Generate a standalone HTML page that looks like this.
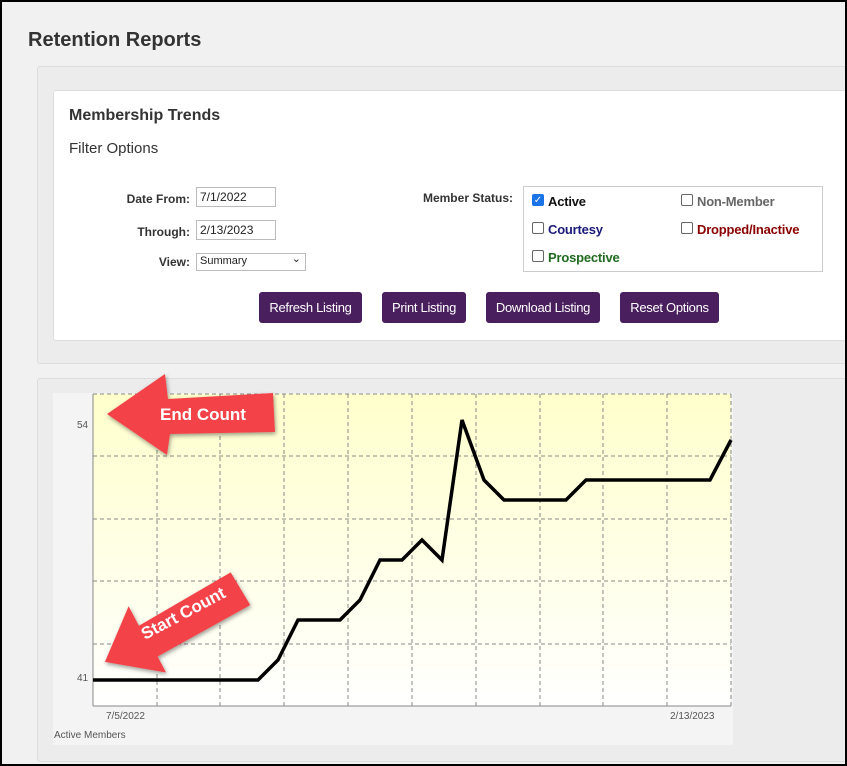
<!DOCTYPE html>
<html><head><style>
*{box-sizing:border-box}
body{margin:0;width:847px;height:766px;overflow:hidden;font-family:"Liberation Sans",Arial,sans-serif;background:#f1f1f1;position:relative}
.frame{position:absolute;left:0;top:0;width:847px;height:766px;border:2px solid #000;z-index:10;pointer-events:none}
h1{position:absolute;left:28px;top:29px;margin:0;font-size:20px;font-weight:bold;color:#333}
.p1{position:absolute;left:37px;top:66px;width:820px;height:298px;background:#ececec;border:1px solid #ddd;border-radius:3px}
.in{position:absolute;left:53px;top:90px;width:800px;height:251px;background:#fff;border:1px solid #ddd;border-radius:3px}
.t{position:absolute;font-size:14px;color:#333}
.lab{position:absolute;font-size:12px;font-weight:bold;color:#333;text-align:right}
.inp{position:absolute;height:20px;border:1px solid #bbb;font-size:12px;padding:2px 3px;color:#222;background:#fff}
.btn{position:absolute;top:292px;height:31px;background:#4a1f5e;color:#fff;font-size:13px;line-height:31px;text-align:center;border-radius:3px;letter-spacing:-0.3px}
.cb{position:absolute;width:12px;height:12px;border:1px solid #666;border-radius:2px;background:#fff}
.st{position:absolute;font-size:13px;font-weight:bold;letter-spacing:-0.2px}
.p2{position:absolute;left:37px;top:378px;width:820px;height:384px;background:#ececec;border:1px solid #ddd;border-radius:3px}
</style></head><body>
<div class="frame"></div>
<h1>Retention Reports</h1>
<div class="p1"></div>
<div class="in"></div>
<div class="t" style="left:69px;top:107px;font-size:16px;font-weight:bold">Membership Trends</div>
<div class="t" style="left:69px;top:140px;font-size:15px">Filter Options</div>
<div class="lab" style="left:100px;width:90px;top:192px">Date From:</div>
<div class="inp" style="left:196px;top:187px;width:80px">7/1/2022</div>
<div class="lab" style="left:100px;width:90px;top:225px">Through:</div>
<div class="inp" style="left:196px;top:220px;width:80px">2/13/2023</div>
<div class="lab" style="left:100px;width:90px;top:255px">View:</div>
<div class="inp" style="left:196px;top:253px;width:110px;height:18px;font-size:11px;padding-top:1px">Summary<span style="position:absolute;right:4px;top:-2px;font-size:11px">&#8964;</span></div>
<div class="lab" style="left:400px;width:113px;top:191px">Member Status:</div>
<div style="position:absolute;left:523px;top:186px;width:300px;height:86px;border:1px solid #ccc;background:#fff"></div>
<div class="cb" style="left:532px;top:194px;background:#1a73e8;border-color:#1a73e8;color:#fff;font-size:10px;line-height:11px;text-align:center">✓</div>
<div class="st" style="left:548px;top:194px;color:#111">Active</div>
<div class="cb" style="left:681px;top:194px"></div>
<div class="st" style="left:697px;top:194px;color:#666">Non-Member</div>
<div class="cb" style="left:532px;top:222px"></div>
<div class="st" style="left:548px;top:222px;color:#1a1a7a">Courtesy</div>
<div class="cb" style="left:681px;top:222px"></div>
<div class="st" style="left:697px;top:222px;color:#8b0000">Dropped/Inactive</div>
<div class="cb" style="left:532px;top:250px"></div>
<div class="st" style="left:548px;top:250px;color:#1f6b1f">Prospective</div>
<div class="btn" style="left:259px;width:103px">Refresh Listing</div>
<div class="btn" style="left:382px;width:84px">Print Listing</div>
<div class="btn" style="left:486px;width:114px">Download Listing</div>
<div class="btn" style="left:620px;width:99px">Reset Options</div>
<div class="p2"></div>
<svg style="position:absolute;left:0;top:0" width="847" height="766">
<defs><linearGradient id="g" x1="0" y1="0" x2="0" y2="1"><stop offset="0" stop-color="#ffffcc"/><stop offset="1" stop-color="#ffffff"/></linearGradient>
<filter id="sh"><feDropShadow dx="1" dy="2" stdDeviation="2" flood-opacity="0.4"/></filter></defs>
<rect x="53" y="393" width="680" height="352" fill="#f4f4f4"/>
<rect x="93" y="394" width="638" height="312" fill="url(#g)"/>
<g stroke="#888" stroke-dasharray="4,3" stroke-width="1">
<line x1="157" y1="394" x2="157" y2="706"/><line x1="220" y1="394" x2="220" y2="706"/><line x1="284" y1="394" x2="284" y2="706"/><line x1="348" y1="394" x2="348" y2="706"/><line x1="412" y1="394" x2="412" y2="706"/><line x1="476" y1="394" x2="476" y2="706"/><line x1="540" y1="394" x2="540" y2="706"/><line x1="603" y1="394" x2="603" y2="706"/><line x1="667" y1="394" x2="667" y2="706"/><line x1="731" y1="394" x2="731" y2="706"/>
<line x1="93" y1="394" x2="731" y2="394"/><line x1="93" y1="456" x2="731" y2="456"/><line x1="93" y1="519" x2="731" y2="519"/><line x1="93" y1="581" x2="731" y2="581"/><line x1="93" y1="644" x2="731" y2="644"/>
</g>
<line x1="93" y1="394" x2="93" y2="706" stroke="#888"/><line x1="93" y1="706" x2="731" y2="706" stroke="#888"/>
<polyline fill="none" stroke="#000" stroke-width="3.5" points="93,680 258,680 278,660 298,620 340,620 360,600 380,560 402,560 422,540 442,560 462,420 484,480 504,500 566,500 586,480 710,480 731,440"/>
<g font-size="10" fill="#555"><text x="77" y="428">54</text><text x="77" y="681">41</text><text x="106" y="719">7/5/2022</text><text x="670" y="719">2/13/2023</text><text x="54" y="738">Active Members</text></g>
<g filter="url(#sh)" fill="#f44248">
<polygon points="107,414 165,374 168,399 273,393 275,432 170,434 167,455"/>
<g transform="translate(180,622) rotate(-28)"><polygon points="-85,0 -38,-38 -38,-16 68,-20 70,18 -36,20 -36,38"/></g>
</g>
<g fill="#fff" font-weight="bold" font-size="17"><text x="160" y="420">End Count</text>
<text x="0" y="0" transform="translate(145,640) rotate(-28)">Start Count</text></g>
</svg>
</body></html>
